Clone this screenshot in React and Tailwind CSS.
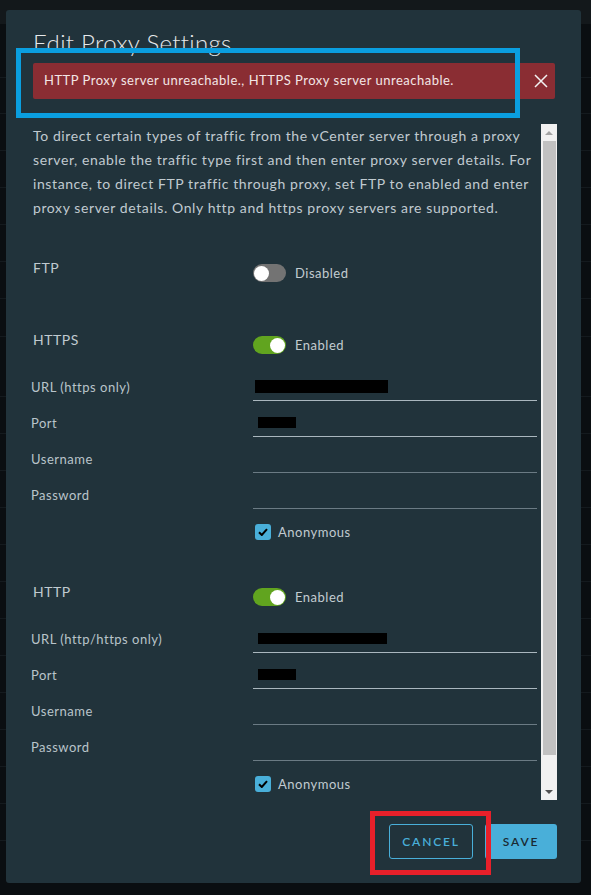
// rows of the page sitting under the dimmed overlay
const backdropRows = [24, 54, 36, 37, 37, 37, 37, 37, 38, 60, 37, 37, 37, 37, 37, 37, 37, 37, 37, 37, 37, 37];

export default function App() {
  return (
    <div className="relative w-[591px] h-[895px] overflow-hidden bg-[#0a0e11] font-['Lato','Liberation_Sans',sans-serif]">
      {/* dimmed page behind the modal */}
      <div className="flex flex-col">
        {backdropRows.map((h, i) => (
          <div
            key={i}
            style={{ height: h }}
            className={i === 0 ? "bg-[#13181b]" : "border-b border-[#141a1e]"}
          />
        ))}
      </div>

      <ProxyModal />

      {/* highlight frames */}
      <div className="absolute left-[16px] top-[48px] w-[504px] h-[70px] border-[5px] border-[#0a9fe0]" />
      <div className="absolute left-[370px] top-[811px] w-[121px] h-[64px] border-[5px] border-[#e8202a]" />
    </div>
  );
}

function ProxyModal() {
  return (
    <div className="absolute left-[6px] top-[10px] w-[575px] h-[873px] bg-[#21333b] rounded-[3px] flex flex-col pl-[27px] pr-[24px]">
      <h3 className="mt-[19px] h-[28px] text-[24px] leading-[28px] font-light tracking-[0.3px] text-[#e6e9eb] whitespace-nowrap">
        Edit Proxy Settings
      </h3>

      {/* error banner */}
      <div className="mt-[6px] w-[522px] h-[36px] bg-[#8a2d33] rounded-[2px] flex items-center justify-between pl-[11px] pr-[7px]">
        <span className="text-[13px] tracking-[0.5px] text-[#f3e6e6] whitespace-nowrap">
          HTTP Proxy server unreachable., HTTPS Proxy server unreachable.
        </span>
        <svg width="14" height="14" viewBox="0 0 14 14">
          <path d="M1 1 L13 13 M13 1 L1 13" fill="none" stroke="#f2f2f2" strokeWidth="1.5" />
        </svg>
      </div>

      {/* scrollable body */}
      <div className="mt-[25px] h-[676px] flex">
        <div className="w-[508px]">
          <p className="text-[14px] leading-[24px] tracking-[0.6px] text-[#c0cad0] whitespace-nowrap">
            To direct certain types of traffic from the vCenter server through a proxy
            <br />
            server, enable the traffic type first and then enter proxy server details. For
            <br />
            instance, to direct FTP traffic through proxy, set FTP to enabled and enter
            <br />
            proxy server details. Only http and https proxy servers are supported.
          </p>

          <ToggleRow label="FTP" on={false} className="mt-[38px]" />

          <ToggleRow label="HTTPS" on className="mt-[48px]" />
          <div className="mt-[11px]">
            <Field label="URL (https only)" value={133} />
            <Field label="Port" value={38} short />
            <Field label="Username" />
            <Field label="Password" />
          </div>
          <Anonymous />

          <ToggleRow label="HTTP" on className="mt-[42px]" />
          <div className="mt-[11px]">
            <Field label="URL (http/https only)" value={129} short />
            <Field label="Port" value={38} short />
            <Field label="Username" />
            <Field label="Password" />
          </div>
          <Anonymous />
        </div>

        <ScrollBar />
      </div>

      {/* footer */}
      <div className="mt-[24px] flex justify-end gap-[12px]">
        <button className="w-[84px] h-[35px] border border-[#49afd9] rounded-[3px] text-[12px] font-semibold tracking-[0.15em] text-[#49afd9]">
          CANCEL
        </button>
        <button className="w-[72px] h-[35px] bg-[#49afd9] rounded-[3px] text-[12px] font-semibold tracking-[0.15em] text-[#1a2a32]">
          SAVE
        </button>
      </div>
    </div>
  );
}

function ToggleRow({ label, on, className }) {
  return (
    <div className={`flex h-[24px] ${className}`}>
      <div className="w-[220px] text-[14px] leading-[20px] tracking-[0.5px] text-[#c0cad0]">{label}</div>
      <div className="mt-[6px] h-[18px] flex items-center gap-[9px]">
        <div
          className={`w-[33px] h-[18px] rounded-full flex items-center px-[1px] ${
            on ? "bg-[#61a41f] justify-end" : "bg-[#737373] justify-start"
          }`}
        >
          <div className="w-[15px] h-[15px] rounded-full bg-white" />
        </div>
        <span className="text-[13px] leading-[16px] tracking-[0.5px] text-[#c3ccd1]">
          {on ? "Enabled" : "Disabled"}
        </span>
      </div>
    </div>
  );
}

function Field({ label, value, short }) {
  return (
    <div className="flex items-end h-[36px]">
      <div className="-ml-[2px] w-[222px] pb-[6px] text-[13px] leading-[16px] tracking-[0.5px] text-[#b9c4ca] whitespace-nowrap">
        {label}
      </div>
      <div
        className={`w-[284px] h-[28px] flex items-center border-b ${
          value ? "border-[#aab7be]" : "border-[#6b7b84]"
        }`}
      >
        {value && (
          <div
            style={{ width: value }}
            className={`bg-black ${short ? "ml-[5px] h-[11px]" : "ml-[2px] h-[13px]"}`}
          />
        )}
      </div>
    </div>
  );
}

function Anonymous() {
  return (
    <div className="mt-[15px] ml-[222px] h-[16px] flex items-center gap-[7px]">
      <div className="w-[16px] h-[16px] rounded-[3px] bg-[#49afd9] flex items-center justify-center">
        <svg width="10" height="8" viewBox="0 0 10 8">
          <path d="M1 4.2 L3.8 7 L9 1.2" fill="none" stroke="#000" strokeWidth="2" />
        </svg>
      </div>
      <span className="text-[13px] leading-[16px] tracking-[0.5px] text-[#c0cad0]">Anonymous</span>
    </div>
  );
}

function ScrollBar() {
  return (
    <div className="w-[16px] h-full bg-[#f1f1f1] flex flex-col">
      <div className="h-[17px] flex items-center justify-center">
        <div className="w-0 h-0 border-l-[4px] border-r-[4px] border-b-[4px] border-l-transparent border-r-transparent border-b-[#a3a3a3]" />
      </div>
      <div className="ml-[2px] w-[13px] h-[614px] bg-[#c1c1c1]" />
      <div className="flex-1" />
      <div className="h-[17px] flex items-center justify-center">
        <div className="w-0 h-0 border-l-[4px] border-r-[4px] border-t-[4px] border-l-transparent border-r-transparent border-t-[#505050]" />
      </div>
    </div>
  );
}
